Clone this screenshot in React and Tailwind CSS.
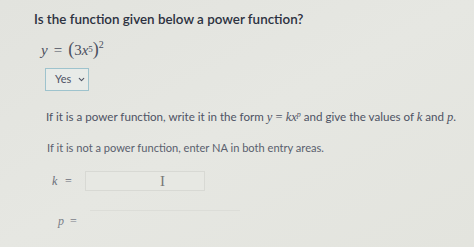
import { ChevronDown } from "lucide-react";

const serif = { fontFamily: '"Liberation Serif", "Times New Roman", serif' };

export default function App() {
  return (
    <div className="w-[474px] h-[247px] overflow-hidden bg-gradient-to-br from-[#e2e3de] via-[#e6e7e2] to-[#e3e4de] font-['Lato',sans-serif] text-[#4e5364]">
      <div className="pl-[34px] pt-[10px]">
        <h1 className="text-[13.4px] leading-[18px] text-[#2c3140] font-semibold whitespace-nowrap">
          Is the function given below a power function?
        </h1>

        <div className="pl-[7px] mt-[12px] h-[20px] flex items-end text-[#4a4f5e] text-[15px] leading-[20px]" style={serif}>
          <span className="italic">y</span>
          <span className="mx-[6px]">=</span>
          <span className="text-[18px] leading-[21px]">(</span>
          <span>3</span>
          <span className="italic">x</span>
          <span className="text-[9px] self-start -mt-[1px]">5</span>
          <span className="text-[18px] leading-[21px]">)</span>
          <span className="text-[10px] self-start -mt-[5px]">2</span>
        </div>

        <div className="ml-[11px] mt-[8px] w-[44px] h-[23px] border border-[#9ec3cd] bg-[#e8ebe8] flex items-center pl-[9px] gap-[6px] text-[11px] text-[#4e5364]">
          <span>Yes</span>
          <ChevronDown className="w-[9px] h-[9px]" strokeWidth={3} />
        </div>

        <p className="ml-[12px] mt-[18px] text-[11.6px] leading-[16px] whitespace-nowrap">
          If it is a power function, write it in the form{" "}
          <span className="text-[12.5px]" style={serif}>
            <span className="italic">y</span> = <span className="italic">kx<sup className="text-[8px]">p</sup></span>
          </span>{" "}
          and give the values of <span className="italic text-[12.5px]" style={serif}>k</span> and{" "}
          <span className="italic text-[12.5px]" style={serif}>p</span>.
        </p>

        <p className="ml-[13px] mt-[15px] text-[11.1px] leading-[16px] text-[#5a5f6e] whitespace-nowrap">
          If it is not a power function, enter NA in both entry areas.
        </p>

        <div className="ml-[18px] mt-[15px] h-[20px] flex items-center text-[#6a6e7a] text-[12px]" style={serif}>
          <span className="italic w-[13px]">k</span>
          <span className="w-[20px]">=</span>
          <div className="w-[120px] h-[20px] border border-[#d8d9d4] bg-[#e7e8e3] flex items-center pl-[74px]">
            <span className="text-[#777] text-[15px]" style={serif}>I</span>
          </div>
        </div>

        <div className="ml-[24px] mt-[19px] h-[22px] flex items-center text-[#7a7e88] text-[12px]" style={serif}>
          <span className="italic w-[12px]">p</span>
          <span className="w-[20px]">=</span>
          <div className="w-[150px] h-[22px] border-t border-[#dcddd8]" />
        </div>
      </div>
    </div>
  );
}
